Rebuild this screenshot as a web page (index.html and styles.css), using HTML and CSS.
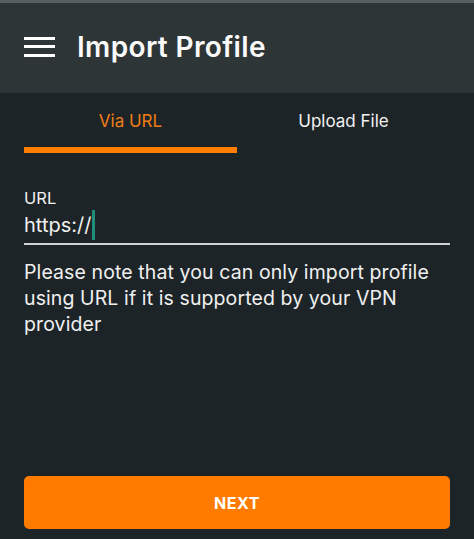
FILE: index.html
```html
<!DOCTYPE html>
<html>
<head>
<meta charset="utf-8">
<link rel="stylesheet" href="styles.css">
</head>
<body>
<div class="app">
  <div class="status"></div>
  <header class="topbar">
    <svg class="menu" width="32" height="22" viewBox="0 0 32 22">
      <rect x="0" y="1" width="31" height="3" fill="#fff"/>
      <rect x="0" y="9" width="31" height="3" fill="#fff"/>
      <rect x="0" y="18" width="31" height="3" fill="#fff"/>
    </svg>
    <h1 class="title">Import Profile</h1>
  </header>
  <nav class="tabs">
    <div class="tab active"><span>Via URL</span><div class="indicator"></div></div>
    <div class="tab"><span>Upload File</span></div>
  </nav>
  <main class="content">
    <div class="field">
      <div class="label">URL</div>
      <div class="input">https://<span class="cursor"></span></div>
    </div>
    <p class="note">Please note that you can only import profile using URL if it is supported by your VPN provider</p>
    <div class="spacer"></div>
    <button class="next">NEXT</button>
  </main>
</div>
</body>
</html>
```
FILE: styles.css
```css
* { box-sizing: border-box; }
html, body { margin: 0; padding: 0; }
body {
  width: 474px;
  height: 539px;
  background: #1d2427;
  font-family: Inter, "Noto Sans", sans-serif;
  color: #fff;
  overflow: hidden;
}
.app { display: flex; flex-direction: column; height: 539px; }
.status { height: 3px; background: #56605f; }
.topbar {
  height: 90px;
  background: #2e3537;
  display: flex;
  align-items: center;
  padding: 0 0 0 24px;
}
.menu { margin-right: 21px; margin-top: -2px; }
.title {
  margin: 0;
  font-size: 28px;
  font-weight: 600;
  letter-spacing: 0.35px;
  color: #fafafa;
  margin-top: -2px;
}
.tabs {
  display: flex;
  padding: 0 24px;
  height: 64px;
}
.tab {
  flex: 1;
  display: flex;
  flex-direction: column;
  align-items: center;
  position: relative;
  padding-top: 18px;
  font-size: 17px;
  color: #f2f2f2;
}
.tab.active { color: #f07d16; }
.tab:first-child { flex: 0 0 213px; }
.indicator {
  position: absolute;
  left: 0; right: 0;
  top: 54px;
  height: 6px;
  background: #ff7d00;
}
.content {
  flex: 1;
  display: flex;
  flex-direction: column;
  padding: 30px 24px 10px;
}
.label { font-size: 16.5px; color: #f0f0f0; line-height: 22px; }
.input {
  font-size: 20px;
  line-height: 32px;
  color: #f0f0f0;
  padding-bottom: 2px;
  border-bottom: 2px solid #d0d2d2;
  display: flex;
  align-items: center;
}
.cursor {
  display: inline-block;
  width: 3px;
  height: 30px;
  background: #1f8f7c;
  margin-left: 1px;
}
.note {
  margin: 14px 0 0;
  font-size: 19.5px;
  line-height: 26px;
  color: #f0f0f0;
  letter-spacing: 0.1px;
}
.spacer { flex: 1; }
.next {
  height: 53px;
  width: 100%;
  border: none;
  border-radius: 5px;
  background: #ff7b00;
  color: #fff;
  font-family: Inter, "Noto Sans", sans-serif;
  font-weight: 700;
  font-size: 16px;
  letter-spacing: 0.5px;
}
```
